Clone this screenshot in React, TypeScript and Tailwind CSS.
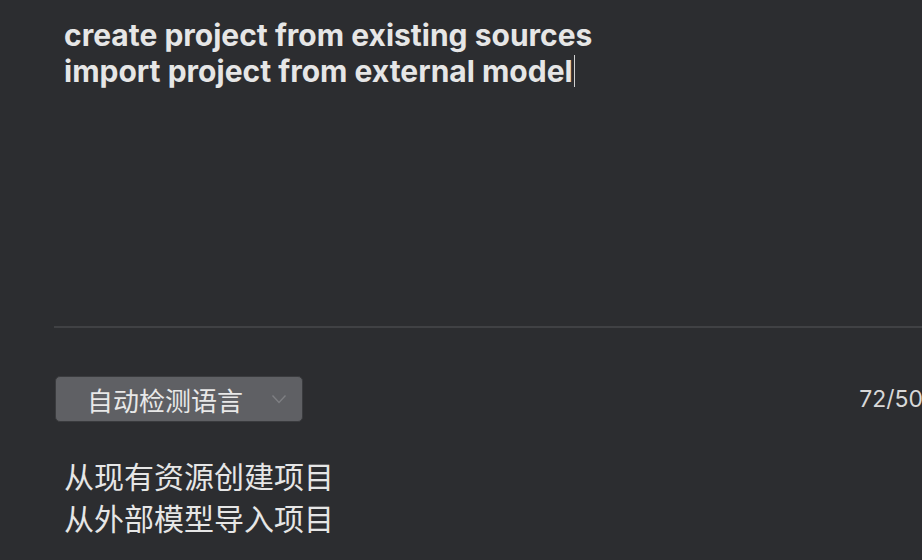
export default function App() {
  return (
    <div className="w-[922px] h-[560px] overflow-hidden bg-[#2c2d30] text-[#e6e6e6]" style={{ fontFamily: 'Inter, "Noto Sans CJK SC", sans-serif' }}>
      <div className="pl-[64px] pt-[17px] h-[326px]">
        <div className="text-[30px] leading-[36px] font-bold">
          <div>create project from existing sources</div>
          <div className="flex items-center">
            import project from external model
            <span className="inline-block w-[1px] h-[32px] bg-[#d0d0d0] ml-[1px]" />
          </div>
        </div>
      </div>
      <div className="ml-[54px] h-[2px] bg-[#404144]" />
      <div className="flex items-center justify-between pl-[55px] mt-[48px]">
        <button className="flex items-center w-[248px] h-[46px] rounded-[5px] bg-[#5f6064] border border-[#3a3b3e] pl-[31px] pr-[15px]">
          <span className="text-[26px] text-[#e8e8e8]" style={{ fontFamily: '"Noto Sans CJK SC", sans-serif' }}>自动检测语言</span>
          <svg className="ml-auto" width="16" height="12" viewBox="0 0 16 12" fill="none" stroke="#7e7f83" strokeWidth="1.4">
            <path d="M1.5 2.5l6.5 7 6.5-7" />
          </svg>
        </button>
        <span className="text-[23px] text-[#d8d8d8] whitespace-nowrap mr-[-30px]">72/5000</span>
      </div>
      <div className="pl-[64px] pt-[32px] text-[30px] leading-[42px] text-[#e6e6e6]" style={{ fontFamily: '"Noto Sans CJK SC", sans-serif' }}>
        <div>从现有资源创建项目</div>
        <div>从外部模型导入项目</div>
      </div>
    </div>
  );
}
